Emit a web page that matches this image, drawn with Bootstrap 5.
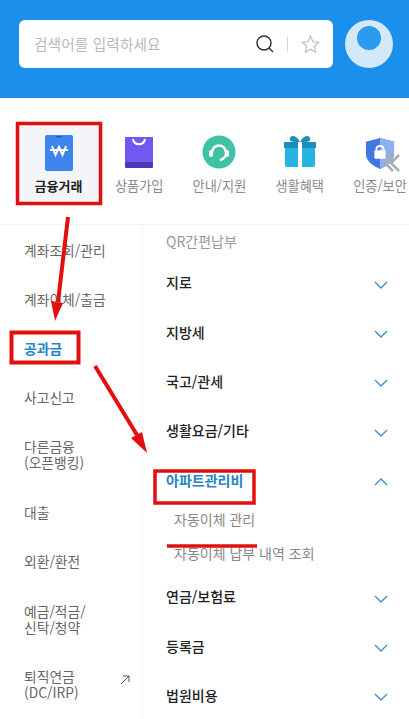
<!DOCTYPE html>
<html lang="ko">
<head>
    <meta charset="UTF-8">
    <meta name="viewport" content="width=device-width, initial-scale=1.0">
    <title>공과금</title>
    <link href="https://cdn.jsdelivr.net/npm/bootstrap@5.3.0/dist/css/bootstrap.min.css" rel="stylesheet">
    <style>
        html, body { height: 719px; overflow: hidden; }
        body { font-family: "Noto Sans CJK KR", "Noto Sans", sans-serif; background: #fff; position: relative; width: 409px; }
        .top-bar { height: 98px; background: #1a8fec; padding: 20px 16px 0 19px; }
        .search-box { width: 314px; height: 48px; border-radius: 6px; padding: 0 13px 0 15px; }
        .search-hint { color: #b9b9b9; font-size: 14.7px; letter-spacing: .1px; }
        .search-sep { width: 1px; height: 15px; background: #d5d5d5; margin: 0 13px 0 12px; }
        .avatar { width: 48px; height: 48px; border-radius: 50%; background: #d3e8f8; }
        .avatar-dot { width: 24px; height: 24px; border-radius: 50%; background: #2b9bf2; margin-top: 6px; }
        .tab-row { height: 127px; padding-top: 24px; border-bottom: 1px solid #f0f0f0; overflow: hidden; }
        .tab-cell { width: 80.3px; flex: none; font-size: 13.2px; color: #8a8a8a; white-space: nowrap; }
        .tab-cell svg { display: block; height: 36px; margin-top: 13px; margin-bottom: 5px; }
        .tab-active { width: 85px; height: 82px; margin-left: 16px; margin-right: -2px; background: #f3f5f8; color: #222; font-weight: 700; font-size: 13px; }
        .menu-left { width: 143px; flex: none; border-right: 1px solid #f2f2f2; padding-left: 24px; font-size: 13.8px; color: #666; line-height: 16px; }
        .menu-left div { display: flex; align-items: center; height: 49px; white-space: nowrap; }
        .left-on { color: #1f86c9; font-weight: 700; }
        .menu-right { flex: 1; padding: 0 21px 0 23px; font-size: 14px; color: #222; font-weight: 500; }
        .menu-line { height: 49.4px; }
        .menu-line svg { width: 14px; height: 8px; margin-top: 4px; }
        .qr-line { color: #999; font-weight: 400; height: 33px; }
        .apt-line { color: #1f86c9; font-weight: 700; }
        .sub-line { color: #888; font-weight: 400; margin-left: 8px; height: 34px; white-space: nowrap; }
        .sub-first { margin-top: -2px; }
        .sub-last { margin-bottom: 1px; }
        .overlay { position: absolute; left: 0; top: 0; pointer-events: none; }
    </style>
</head>
<body>
    <div class="top-bar d-flex justify-content-between">
        <div class="search-box bg-white d-flex align-items-center">
            <span class="search-hint flex-grow-1">검색어를 입력하세요</span>
            <svg width="20" height="20" viewBox="0 0 20 20" fill="none" stroke="#333" stroke-width="1.5"><circle cx="9" cy="9" r="7"/><path d="M14 14l4 4"/></svg>
            <span class="search-sep"></span>
            <svg width="19" height="19" viewBox="0 0 21 21" fill="none" stroke="#bbb" stroke-width="1.3"><path d="M10.5 1.5l2.7 6 6.3.7-4.7 4.3 1.3 6.5-5.6-3.3-5.6 3.3 1.3-6.5L1.500 8.200l6.300-.7z"/></svg>
        </div>
        <div class="avatar d-flex justify-content-center"><span class="avatar-dot"></span></div>
    </div>

    <div class="tab-row d-flex align-items-start">
        <div class="tab-cell tab-active d-flex flex-column align-items-center">
            <svg width="28" height="36" viewBox="0 0 28 36"><rect width="28" height="36" rx="2" fill="#3d84ee"/><rect x="11" y="1" width="6" height="1.500" fill="#1f5fc0"/><path d="M7 11l3.500 9 3.500-8 3.500 8 3.500-9M5 15h18" fill="none" stroke="#fff" stroke-width="2"/></svg>
            <span>금융거래</span>
        </div>
        <div class="tab-cell d-flex flex-column align-items-center">
            <svg width="28" height="36" viewBox="0 0 28 36"><rect y="2" width="28" height="26" fill="#7258f0"/><rect y="27" width="28" height="6" rx="1" fill="#4d38b8"/><path d="M8 4c1 7 11 7 12 0" fill="none" stroke="#fff" stroke-width="2"/></svg>
            <span>상품가입</span>
        </div>
        <div class="tab-cell d-flex flex-column align-items-center">
            <svg width="34" height="36" viewBox="0 0 34 36"><circle cx="17" cy="17" r="16.500" fill="#3fc1a4"/><path d="M10 18c0-10 14-10 14 0 0 4-2 6-6 7" fill="none" stroke="#fff" stroke-width="2.500"/><rect x="7" y="15" width="4" height="7" rx="2" fill="#fff"/><rect x="23" y="15" width="4" height="7" rx="2" fill="#fff"/></svg>
            <span>안내/지원</span>
        </div>
        <div class="tab-cell d-flex flex-column align-items-center">
            <svg width="32" height="36" viewBox="0 0 32 36"><rect x="1" y="11" width="30" height="21" rx="2" fill="#27b4e2"/><rect y="7" width="32" height="6" fill="#1b8fb8"/><rect x="14" y="7" width="4" height="25" fill="#fff"/><path d="M16 7C12 -1 5 0 6 5c0 2 5 2 10 2zm0 0c4-8 11-7 10-2 0 2-5 2-10 2z" fill="#1b8fb8"/></svg>
            <span>생활혜택</span>
        </div>
        <div class="tab-cell d-flex flex-column align-items-center">
            <svg width="30" height="36" viewBox="0 0 32 36"><path d="M16 2l15 4v13c0 8-8 13-15 16C9 32 1 27 1 19V6z" fill="#4277e0"/><path d="M16 2l15 4v13c0 8-8 13-15 16z" fill="#8fb0ee"/><rect x="10" y="15" width="12" height="9" rx="1" fill="#fff"/><path d="M12 15c0-6 8-6 8 0" fill="none" stroke="#fff" stroke-width="2"/></svg>
            <span>인증/보안</span>
        </div>
    </div>

    <div class="d-flex">
        <div class="menu-left">
            <div>계좌조회/관리</div>
            <div>계좌이체/출금</div>
            <div class="left-on">공과금</div>
            <div>사고신고</div>
            <div style="height:66px">다른금융<br>(오픈뱅킹)</div>
            <div>대출</div>
            <div>외환/환전</div>
            <div style="height:67px">예금/적금/<br>신탁/청약</div>
            <div class="justify-content-between" style="height:64px;padding-right:12px"><span>퇴직연금<br>(DC/IRP)</span><svg class="mb-2" width="10" height="10" viewBox="0 0 10 10" fill="none" stroke="#555"><path d="M1 9l8-8M3 1h6v6"/></svg></div>
        </div>
        <div class="menu-right">
            <div class="menu-line qr-line d-flex align-items-center">QR간편납부</div>
            <div class="menu-line d-flex justify-content-between align-items-center">지로<svg viewBox="0 0 14 8" fill="none" stroke="#3b8fd0" stroke-width="1.4"><path d="M1 1l6 6 6-6"/></svg></div>
            <div class="menu-line d-flex justify-content-between align-items-center">지방세<svg viewBox="0 0 14 8" fill="none" stroke="#3b8fd0" stroke-width="1.4"><path d="M1 1l6 6 6-6"/></svg></div>
            <div class="menu-line d-flex justify-content-between align-items-center">국고/관세<svg viewBox="0 0 14 8" fill="none" stroke="#3b8fd0" stroke-width="1.4"><path d="M1 1l6 6 6-6"/></svg></div>
            <div class="menu-line d-flex justify-content-between align-items-center">생활요금/기타<svg viewBox="0 0 14 8" fill="none" stroke="#3b8fd0" stroke-width="1.4"><path d="M1 1l6 6 6-6"/></svg></div>
            <div class="menu-line apt-line d-flex justify-content-between align-items-center">아파트관리비<svg viewBox="0 0 14 8" fill="none" stroke="#3b8fd0" stroke-width="1.4"><path d="M1 7l6-6 6 6"/></svg></div>
            <div class="sub-line sub-first d-flex align-items-center">자동이체 관리</div>
            <div class="sub-line sub-last d-flex align-items-center">자동이체 납부 내역 조회</div>
            <div class="menu-line d-flex justify-content-between align-items-center">연금/보험료<svg viewBox="0 0 14 8" fill="none" stroke="#3b8fd0" stroke-width="1.4"><path d="M1 1l6 6 6-6"/></svg></div>
            <div class="menu-line d-flex justify-content-between align-items-center">등록금<svg viewBox="0 0 14 8" fill="none" stroke="#3b8fd0" stroke-width="1.4"><path d="M1 1l6 6 6-6"/></svg></div>
            <div class="menu-line d-flex justify-content-between align-items-center">법원비용<svg viewBox="0 0 14 8" fill="none" stroke="#3b8fd0" stroke-width="1.4"><path d="M1 1l6 6 6-6"/></svg></div>
        </div>
    </div>

    <!-- red annotations drawn over the screenshot -->
    <svg class="overlay" width="409" height="719" fill="none" stroke="#e30f0f">
        <path d="M393 155l-8 8 8 8M399 155l-8 8 8 8" stroke="#a9acb2" stroke-width="2.500"/>
        <rect x="17.500" y="123.500" width="83" height="80" stroke-width="3.500"/>
        <rect x="11.500" y="332.500" width="67" height="30" stroke-width="4"/>
        <rect x="155" y="471" width="99" height="32" stroke-width="3.500"/>
        <path d="M167 546h90" stroke-width="3.500"/>
        <path d="M68 217l-10 85" stroke-width="4"/>
        <path d="M51 301l12 2-8 18z" fill="#e30f0f" stroke="none"/>
        <path d="M95 366l42 69" stroke-width="4"/>
        <path d="M131 438l11-6 5 21z" fill="#e30f0f" stroke="none"/>
    </svg>

    <script src="https://cdn.jsdelivr.net/npm/bootstrap@5.3.0/dist/js/bootstrap.bundle.min.js"></script>
</body>
</html>
